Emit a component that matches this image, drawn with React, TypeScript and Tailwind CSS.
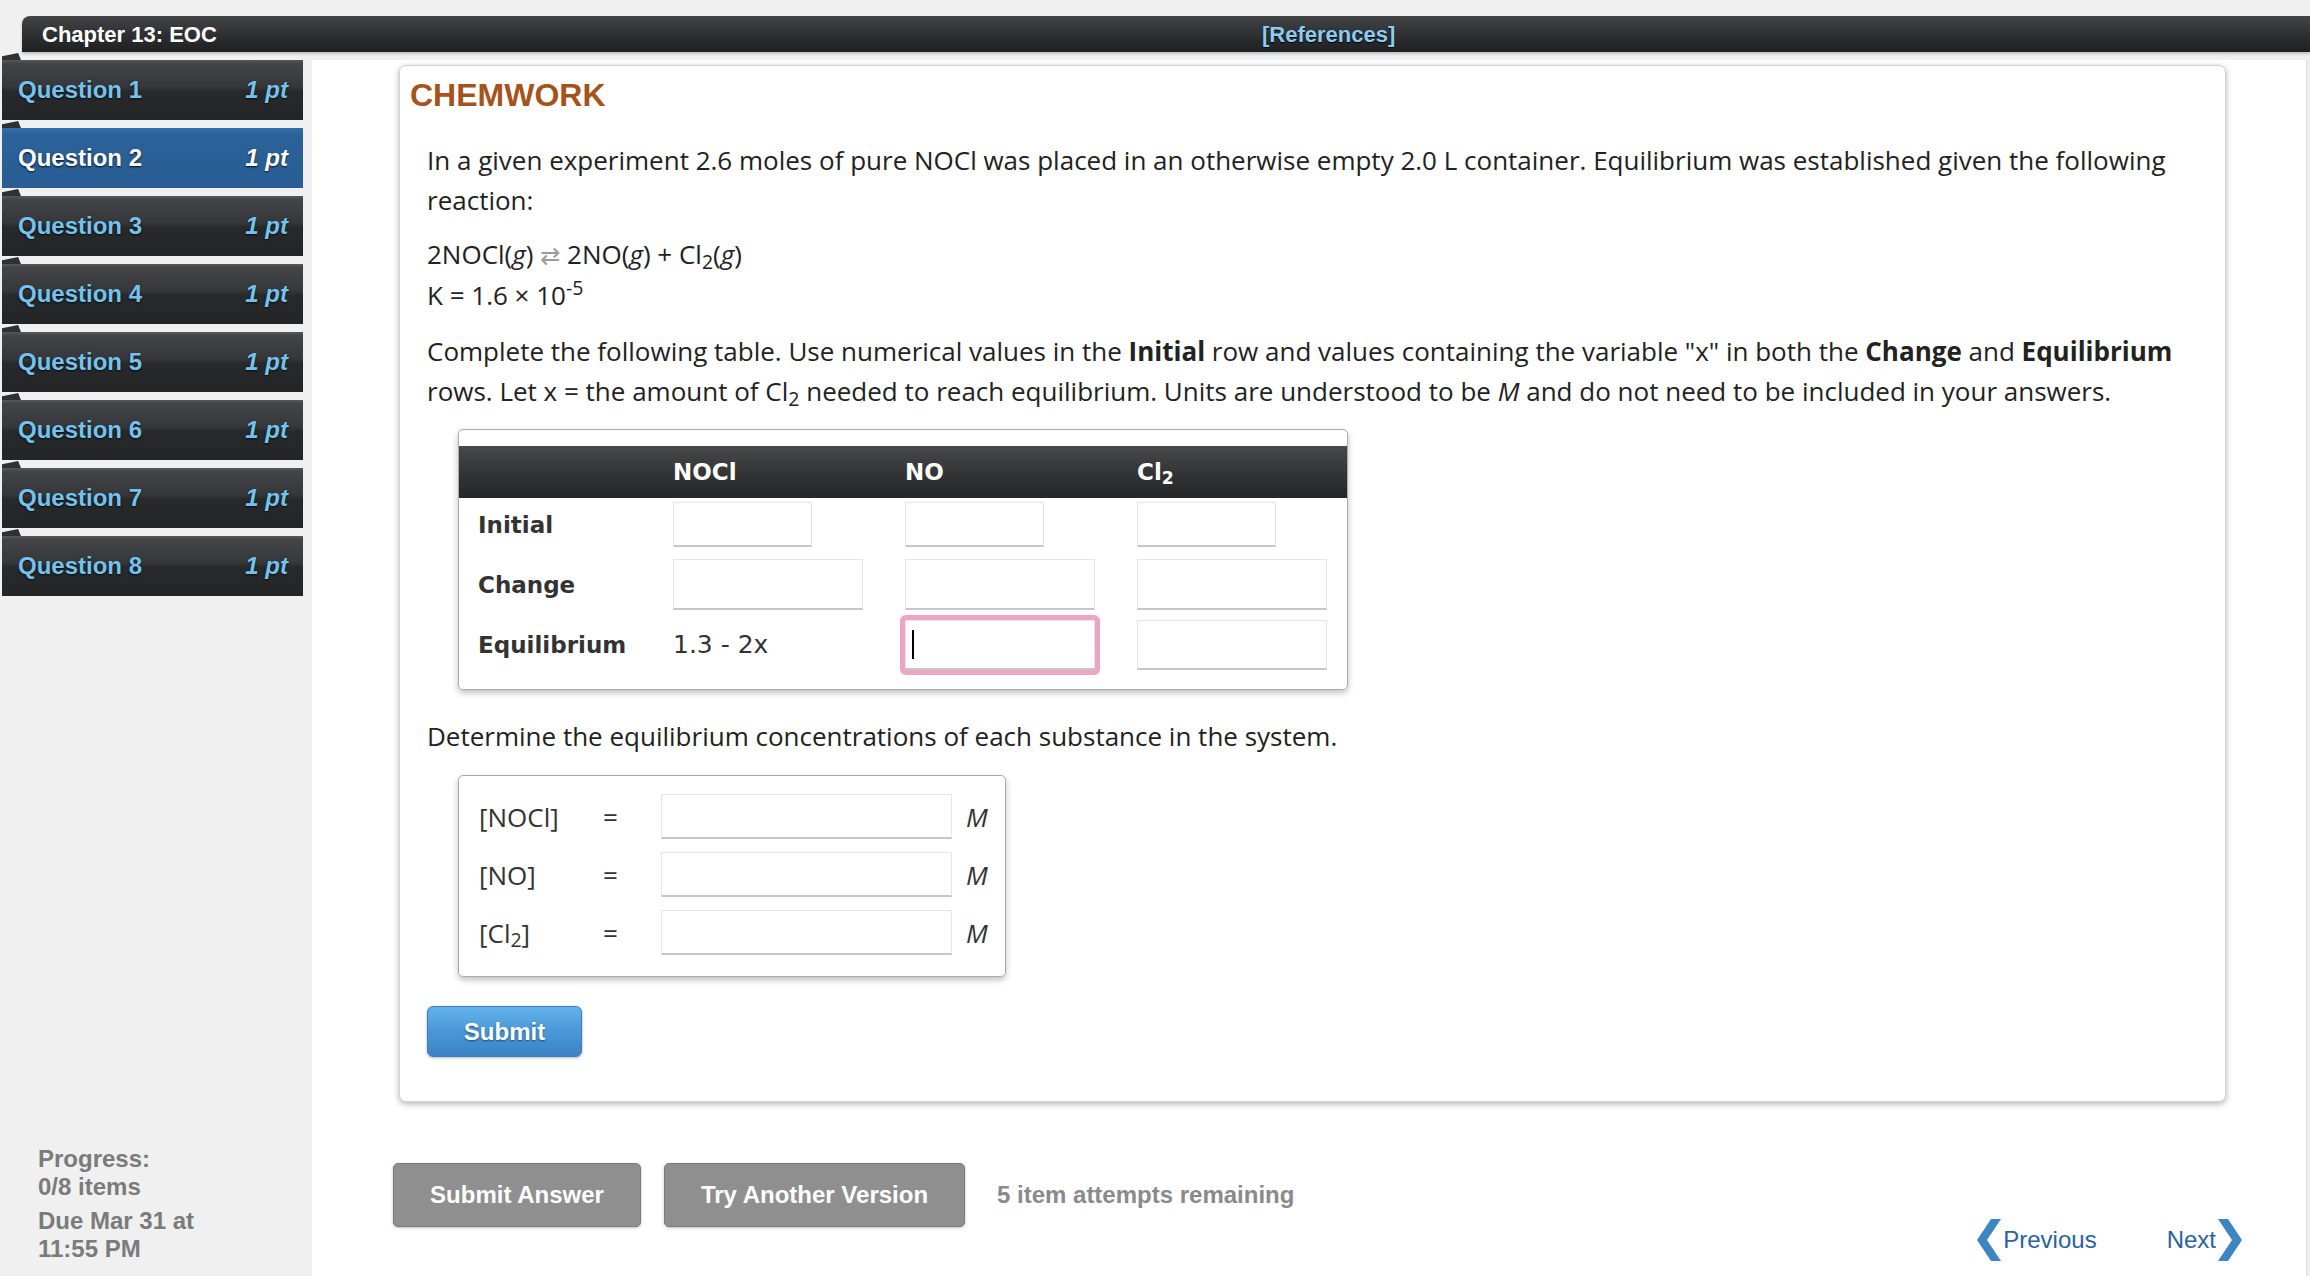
import React from 'react';

const QUESTIONS = [1, 2, 3, 4, 5, 6, 7, 8];

const QuestionItem: React.FC<{ n: number; active?: boolean }> = ({ n, active }) => (
    <div
        className={`relative h-[60px] w-[301px] flex items-center justify-between pl-[16px] pr-[15px] ${
            active
                ? 'bg-[linear-gradient(to_bottom,#3170ab_0%,#2b6299_10%,#295d93_100%)] text-white'
                : 'bg-[linear-gradient(to_bottom,#58595b_0%,#434446_6%,#36373a_45%,#28292b_52%,#242527_100%)] text-[#74c3ee]'
        }`}
    >
        <div className="absolute left-0 -top-[7px] h-[7px] w-[19px] bg-[#303133] [clip-path:polygon(0_45%,85%_0,100%_100%,0_100%)]" />
        <span className="text-[24px] font-bold [text-shadow:0_1px_2px_rgba(0,0,0,0.85)]">Question {n}</span>
        <span className="text-[24px] font-bold italic [text-shadow:0_1px_2px_rgba(0,0,0,0.85)]">1 pt</span>
    </div>
);

const Field: React.FC<{ className?: string; focused?: boolean }> = ({ className = '', focused }) => (
    <div
        className={`relative bg-white border border-[#e6e6e6] border-b-2 border-b-[#c6c6c6] ${
            focused ? 'rounded-[2px] shadow-[0_0_0_5px_#eea5c5]' : ''
        } ${className}`}
    >
        {focused && <div className="absolute left-[6px] top-[9px] w-[2px] h-[29px] bg-black" />}
    </div>
);

const Chevron: React.FC<{ dir: 'left' | 'right' }> = ({ dir }) => (
    <svg width="24" height="42" viewBox="0 0 24 42" className="shrink-0">
        {dir === 'left' ? (
            <polygon points="24,0 14,0 0,21 14,42 24,42 10,21" fill="#3d86c3" />
        ) : (
            <polygon points="0,0 10,0 24,21 10,42 0,42 14,21" fill="#3d86c3" />
        )}
    </svg>
);

export default function App() {
    return (
        <div className="w-[2310px] h-[1276px] overflow-hidden bg-[#f0f0f0] [font-family:'Liberation_Sans',Arial,sans-serif]">
            {/* top bar */}
            <div className="ml-[22px] mt-[16px] h-[36px] rounded-tl-[8px] flex items-center bg-[linear-gradient(to_bottom,#434446,#2b2c2e_60%,#1f2022)] shadow-[0_2px_3px_rgba(0,0,0,0.2)]">
                <span className="w-[1240px] pl-[20px] text-[22px] font-bold text-white">Chapter 13: EOC</span>
                <span className="text-[22px] font-bold text-[#8ecbf3] [text-shadow:0_1px_1px_#000]">[References]</span>
            </div>

            <div className="flex mt-[8px] h-[1216px]">
                {/* sidebar */}
                <aside className="w-[312px] shrink-0 flex flex-col justify-between pl-[2px] pb-[13px]">
                    <div className="flex flex-col gap-[8px]">
                        {QUESTIONS.map((n) => (
                            <QuestionItem key={n} n={n} active={n === 2} />
                        ))}
                    </div>
                    <div className="pl-[36px] text-[24px] font-bold text-[#7b7b7b] leading-[28px]">
                        <div>Progress:</div>
                        <div>0/8 items</div>
                        <div className="mt-[6px]">Due Mar 31 at</div>
                        <div>11:55 PM</div>
                    </div>
                </aside>

                {/* main */}
                <main className="w-[1995px] shrink-0 bg-white border-r border-[#dcdcdc] pl-[81px] pt-[5px]">
                    <div className="ml-[6px] w-[1827px] h-[1037px] bg-white border border-[#d2d2d2] rounded-[7px] shadow-[0_2px_6px_rgba(0,0,0,0.3)]">
                        <h1 className="pl-[10px] pt-[13px] text-[32px] leading-[32px] font-bold text-[#a4531c]">CHEMWORK</h1>

                        <div className="px-[27px] [font-family:'Open_Sans',sans-serif] text-[26px] leading-[40px] text-[#222]">
                            <p className="mt-[29px]">
                                In a given experiment 2.6 moles of pure NOCl was placed in an otherwise empty 2.0 L container. Equilibrium was
                                established given the following reaction:
                            </p>
                            <div className="mt-[15px] leading-[39px]">
                                <div>
                                    2NOCl(<i>g</i>){' '}
                                    <span className="text-[#9a9a9a] [font-family:'DejaVu_Sans',sans-serif] text-[24px]">⇄</span> 2NO(<i>g</i>) + Cl
                                    <sub>2</sub>(<i>g</i>)
                                </div>
                                <div>
                                    K = 1.6 × 10<sup>-5</sup>
                                </div>
                            </div>
                            <p className="mt-[16px]">
                                Complete the following table. Use numerical values in the <b>Initial</b> row and values containing the variable "x" in
                                both the <b>Change</b> and <b>Equilibrium</b> rows. Let x = the amount of Cl<sub>2</sub> needed to reach equilibrium.
                                Units are understood to be <i>M</i> and do not need to be included in your answers.
                            </p>

                            {/* ICE table */}
                            <div className="mt-[18px] ml-[31px] w-[890px] h-[261px] border border-[#ababab] rounded-[5px] shadow-[0_3px_6px_rgba(0,0,0,0.25)] pt-[16px] [font-family:'DejaVu_Sans',Verdana,sans-serif] text-[23px] leading-[28px] text-[#333]">
                                <div className="h-[52px] grid grid-cols-[214px_232px_232px_1fr] items-center bg-[linear-gradient(to_bottom,#48494b,#303133_60%,#252628)] text-white font-bold">
                                    <span />
                                    <span>NOCl</span>
                                    <span>NO</span>
                                    <span>
                                        Cl<sub>2</sub>
                                    </span>
                                </div>
                                <div className="mt-[4px] grid grid-cols-[214px_232px_232px_1fr] items-center">
                                    <span className="pl-[19px] font-bold">Initial</span>
                                    <Field className="w-[139px] h-[45px]" />
                                    <Field className="w-[139px] h-[45px]" />
                                    <Field className="w-[139px] h-[45px]" />
                                </div>
                                <div className="mt-[12px] grid grid-cols-[214px_232px_232px_1fr] items-center">
                                    <span className="pl-[19px] font-bold">Change</span>
                                    <Field className="w-[190px] h-[51px]" />
                                    <Field className="w-[190px] h-[51px]" />
                                    <Field className="w-[190px] h-[51px]" />
                                </div>
                                <div className="mt-[10px] grid grid-cols-[214px_232px_232px_1fr] items-center">
                                    <span className="pl-[19px] font-bold">Equilibrium</span>
                                    <span className="text-[25px]">1.3 - 2x</span>
                                    <Field className="w-[190px] h-[50px]" focused />
                                    <Field className="w-[190px] h-[50px]" />
                                </div>
                            </div>

                            <p className="mt-[26px]">Determine the equilibrium concentrations of each substance in the system.</p>

                            {/* concentrations */}
                            <div className="mt-[19px] ml-[31px] w-[548px] h-[202px] border border-[#ababab] rounded-[5px] shadow-[0_3px_6px_rgba(0,0,0,0.25)] pt-[18px] pl-[20px] flex flex-col gap-[13px] text-[#333]">
                                {[
                                    <>[NOCl]</>,
                                    <>[NO]</>,
                                    <>
                                        [Cl<sub>2</sub>]
                                    </>,
                                ].map((label, i) => (
                                    <div key={i} className="flex items-center h-[45px]">
                                        <span className="w-[124px]">{label}</span>
                                        <span className="w-[58px]">=</span>
                                        <Field className="w-[291px] h-[45px]" />
                                        <i className="ml-[14px]">M</i>
                                    </div>
                                ))}
                            </div>

                            <button className="mt-[29px] w-[155px] h-[51px] rounded-[6px] border border-[#3b7fc0] bg-[linear-gradient(to_bottom,#62b3ec,#4a98d8_50%,#3b82c4)] shadow-[0_1px_3px_rgba(0,0,0,0.3)] text-white text-[24px] font-bold [font-family:'Liberation_Sans',Arial,sans-serif] [text-shadow:0_1px_2px_rgba(0,0,0,0.5)]">
                                Submit
                            </button>
                        </div>
                    </div>

                    {/* bottom actions */}
                    <div className="mt-[61px] w-[1849px] flex items-start">
                        <button className="w-[248px] h-[64px] rounded-[5px] border border-[#7a7a7a] bg-[#8f8f8f] shadow-[0_1px_3px_rgba(0,0,0,0.25)] text-white text-[24px] font-bold">
                            Submit Answer
                        </button>
                        <button className="ml-[23px] w-[301px] h-[64px] rounded-[5px] border border-[#7a7a7a] bg-[#8f8f8f] shadow-[0_1px_3px_rgba(0,0,0,0.25)] text-white text-[24px] font-bold">
                            Try Another Version
                        </button>
                        <span className="ml-[32px] h-[64px] flex items-center text-[24px] font-bold text-[#8a8a8a]">5 item attempts remaining</span>

                        <nav className="ml-auto mt-[56px] flex items-center text-[24px] text-[#2b62a0]">
                            <Chevron dir="left" />
                            <span className="ml-[2px]">Previous</span>
                            <span className="ml-[70px]">Next</span>
                            <span className="ml-[2px]">
                                <Chevron dir="right" />
                            </span>
                        </nav>
                    </div>
                </main>
            </div>
        </div>
    );
}
